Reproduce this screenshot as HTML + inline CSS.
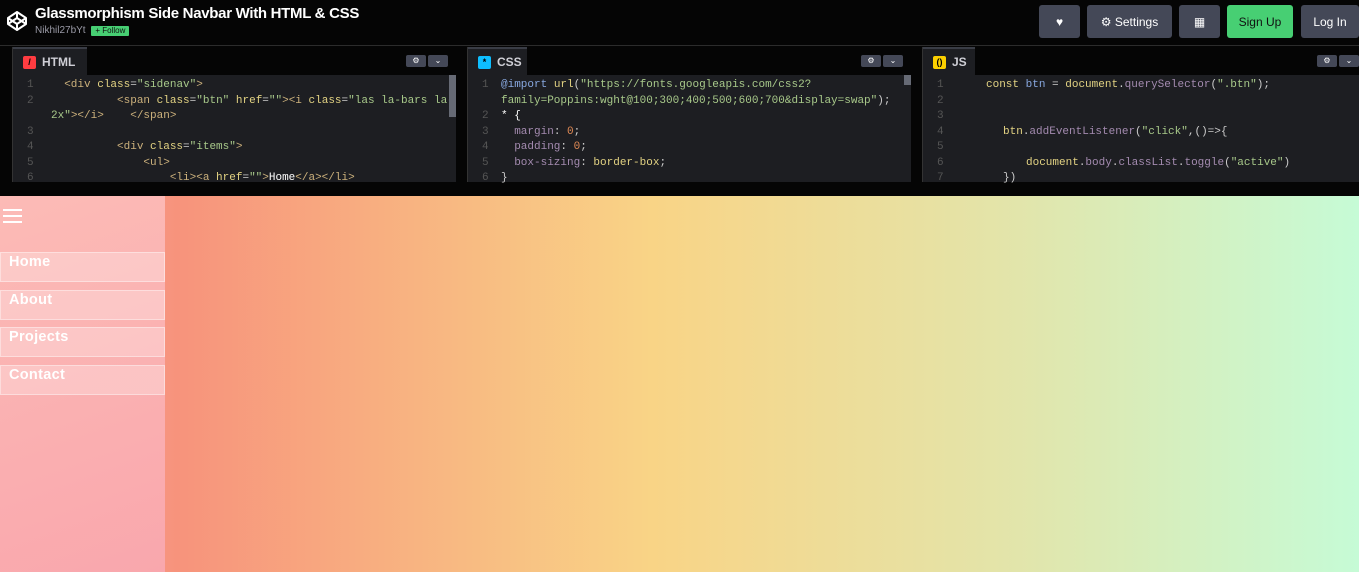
<!DOCTYPE html>
<html><head><meta charset="utf-8"><style>
*{margin:0;padding:0;box-sizing:border-box}
body{width:1359px;height:572px;background:#050505;font-family:"Liberation Sans",sans-serif;overflow:hidden;position:relative}
.top{position:absolute;left:0;top:0;width:1359px;height:46px;background:#050505;border-bottom:1px solid #2c2c2c}
.title{position:absolute;left:35px;top:5px;color:#fff;font-weight:bold;font-size:15px;letter-spacing:-0.3px}
.user{position:absolute;left:35px;top:25px;color:#9a9aa6;font-size:10px}
.follow{display:inline-block;background:#47cf73;color:#111;font-size:8px;padding:0 4px;margin-left:3px;border-radius:1px;line-height:10px}
.btn{position:absolute;top:5px;height:33px;background:#444857;border-radius:3px;color:#fff;font-size:12px;display:flex;align-items:center;justify-content:center}
.panel{position:absolute;top:47px;height:135px;background:#1d1e22;border-left:1px solid #333}
.phead{height:28px;background:#050505;position:relative}
.tab{position:absolute;left:0;top:0;height:28px;background:#1d1e22;color:#cfcfd6;font-weight:bold;font-size:12px;display:flex;align-items:center;padding-left:10px;gap:6px;border-top:2px solid #3a3d46}
.ic{width:13px;height:13px;border-radius:2px;display:inline-block;font-size:9px;text-align:center;line-height:13px;color:#000}
.pb{position:absolute;top:8px;height:12px;background:#444857;border-radius:2px;width:20px;color:#fff;font-size:8px;text-align:center;line-height:12px}
pre{font-family:"Liberation Mono",monospace;font-size:11px;line-height:15.5px;color:#ccc;padding-top:3px;white-space:pre}
.ln{color:#555;display:inline-block;width:38px;padding-left:14px}
.t{color:#ccb17c}.a{color:#e3d383}.s{color:#a8c98a}.p{color:#a48bb0}.n{color:#e08a55}.w{color:#fff}.k{color:#e3d383}.b{color:#88a8e0}
.prev{position:absolute;left:0;top:196px;width:1359px;height:376px;background:linear-gradient(90deg,#f9a6aa 0%,#f7937c 13%,#f9d486 48%,#e2e5ab 75%,#c6fbd6 100%)}
.side{position:absolute;left:0;top:0;width:165px;height:376px;background:linear-gradient(160deg,#fcbbb6,#f9a7ad)}
.item{position:absolute;left:0;width:165px;height:30px;background:rgba(255,255,255,0.25);border:1px solid rgba(255,255,255,0.4);color:#fff;font-weight:bold;font-size:14.5px;padding-left:8px;line-height:18px;letter-spacing:0.3px}
.bar{position:absolute;left:3px;width:19px;height:2px;background:#fff}
</style></head><body>
<div class="top">
<svg style="position:absolute;left:6px;top:10px" width="22" height="22" viewBox="0 0 22 22" fill="none" stroke="#fff" stroke-width="2" stroke-linejoin="round"><path d="M11 2L20 8V14L11 20L2 14V8Z M2 8L11 14L20 8 M2 14L11 8L20 14 M11 2V8 M11 14V20"/></svg>
<div class="title">Glassmorphism Side Navbar With HTML &amp; CSS</div>
<div class="user">Nikhil27bYt <span class="follow">+ Follow</span></div>
<div class="btn" style="left:1039px;width:41px">♥</div>
<div class="btn" style="left:1087px;width:85px">⚙ Settings</div>
<div class="btn" style="left:1179px;width:41px">▦</div>
<div class="btn" style="left:1227px;width:66px;background:#47cf73;color:#111">Sign Up</div>
<div class="btn" style="left:1301px;width:58px">Log In</div>
</div>

<div class="panel" style="left:12px;width:444px">
<div class="phead"><div class="tab" style="width:74px"><span class="ic" style="background:#ff3c41">/</span>HTML</div><div class="pb" style="left:393px">⚙</div><div class="pb" style="left:415px">⌄</div></div>
<div style="position:absolute;right:0;top:28px;width:7px;height:42px;background:#666a75"></div>
<pre><span class="ln">1</span>  <span class="t">&lt;div</span> <span class="a">class</span>=<span class="s">"sidenav"</span><span class="t">&gt;</span>
<span class="ln">2</span>          <span class="t">&lt;span</span> <span class="a">class</span>=<span class="s">"btn"</span> <span class="a">href</span>=<span class="s">""</span><span class="t">&gt;&lt;i</span> <span class="a">class</span>=<span class="s">"las la-bars la-</span>
<span class="ln"></span><span class="s">2x"</span><span class="t">&gt;&lt;/i&gt;</span>    <span class="t">&lt;/span&gt;</span>
<span class="ln">3</span>
<span class="ln">4</span>          <span class="t">&lt;div</span> <span class="a">class</span>=<span class="s">"items"</span><span class="t">&gt;</span>
<span class="ln">5</span>              <span class="t">&lt;ul&gt;</span>
<span class="ln">6</span>                  <span class="t">&lt;li&gt;&lt;a</span> <span class="a">href</span>=<span class="s">""</span><span class="t">&gt;</span><span class="w">Home</span><span class="t">&lt;/a&gt;&lt;/li&gt;</span></pre>
</div>

<div class="panel" style="left:467px;width:444px">
<div class="phead"><div class="tab" style="width:59px"><span class="ic" style="background:#0ebeff">*</span>CSS</div><div class="pb" style="left:393px">⚙</div><div class="pb" style="left:415px">⌄</div></div>
<div style="position:absolute;right:0;top:28px;width:7px;height:10px;background:#666a75"></div>
<pre><span class="ln" style="width:33px">1</span><span class="b">@import</span> <span class="a">url</span>(<span class="s">"https://fonts.googleapis.com/css2?</span>
<span class="ln" style="width:33px"></span><span class="s">family=Poppins:wght@100;300;400;500;600;700&amp;display=swap"</span>);
<span class="ln" style="width:33px">2</span><span class="w">* {</span>
<span class="ln" style="width:33px">3</span>  <span class="p">margin</span>: <span class="n">0</span>;
<span class="ln" style="width:33px">4</span>  <span class="p">padding</span>: <span class="n">0</span>;
<span class="ln" style="width:33px">5</span>  <span class="p">box-sizing</span>: <span class="k">border-box</span>;
<span class="ln" style="width:33px">6</span>}</pre>
</div>

<div class="panel" style="left:922px;width:437px">
<div class="phead"><div class="tab" style="width:52px"><span class="ic" style="background:#fcd000">()</span>JS</div><div class="pb" style="left:394px">⚙</div><div class="pb" style="left:416px">⌄</div></div>
<pre><span class="ln" style="width:63px">1</span><span class="k">const</span> <span class="b">btn</span> = <span class="k">document</span>.<span class="p">querySelector</span>(<span class="s">".btn"</span>);
<span class="ln">2</span>
<span class="ln">3</span>
<span class="ln" style="width:80px">4</span><span class="k">btn</span>.<span class="p">addEventListener</span>(<span class="s">"click"</span>,()=&gt;{
<span class="ln">5</span>
<span class="ln" style="width:103px">6</span><span class="k">document</span>.<span class="p">body</span>.<span class="p">classList</span>.<span class="p">toggle</span>(<span class="s">"active"</span>)
<span class="ln" style="width:80px">7</span>})</pre>
</div>

<div class="prev">
<div class="side">
<div class="bar" style="top:13px"></div><div class="bar" style="top:19px"></div><div class="bar" style="top:25px"></div>
<div class="item" style="top:56px">Home</div>
<div class="item" style="top:94px">About</div>
<div class="item" style="top:131px">Projects</div>
<div class="item" style="top:169px">Contact</div>
</div>
</div>
</body></html>
